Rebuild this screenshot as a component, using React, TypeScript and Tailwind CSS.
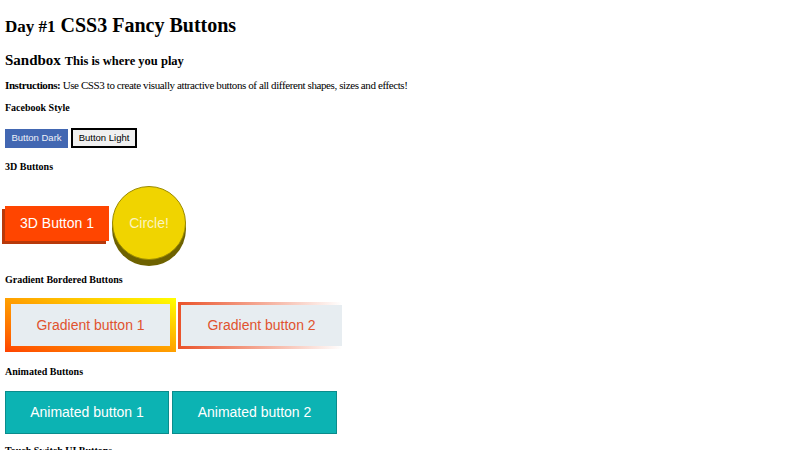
export default function App() {
  return (
    <div className="w-[800px] h-[450px] overflow-hidden bg-white px-[5px] text-black font-['Liberation_Serif',serif]">
      {/* Header */}
      <h1 className="pt-[13px] text-[20px] leading-[24px] font-bold">
        <span className="text-[17px]">Day #1</span> CSS3 Fancy Buttons
      </h1>
      <h2 className="mt-[11px] text-[15px] leading-[20px] font-bold">
        Sandbox <span className="text-[12.5px]">This is where you play</span>
      </h2>
      <p className="mt-[6px] text-[11px] leading-[16px] tracking-[-0.4px]">
        <b>Instructions:</b> Use CSS3 to create visually attractive buttons of all different shapes, sizes and effects!
      </p>

      {/* Facebook */}
      <h4 className="mt-[8px] text-[10px] leading-[14px] font-bold">Facebook Style</h4>
      <div className="mt-[13px] flex items-center gap-[3px] font-['Liberation_Sans',sans-serif] text-[9.5px]">
        <button className="h-[19px] w-[63px] bg-[#4267b2] text-[#eef1f8]">Button Dark</button>
        <button className="h-[20px] w-[66px] border-2 border-black bg-[#f0f0f0] text-black">Button Light</button>
      </div>

      {/* 3D */}
      <h4 className="mt-[12px] text-[10px] leading-[14px] font-bold">3D Buttons</h4>
      <div className="mt-[12px] flex h-[80px] items-start gap-[3px] font-['Liberation_Sans',sans-serif] text-[14px]">
        <button className="mt-[20px] h-[35px] w-[104px] bg-[#ff4500] text-white shadow-[-3px_3px_0_#b8390a]">
          3D Button 1
        </button>
        <button className="h-[74px] w-[74px] rounded-full border border-[#9a8a00] bg-[#f0d400] text-[#fbf3c0] shadow-[0_6px_0_#6e6200]">
          Circle!
        </button>
      </div>

      {/* Gradient */}
      <h4 className="mt-[7px] text-[10px] leading-[14px] font-bold">Gradient Bordered Buttons</h4>
      <div className="mt-[11px] flex items-center gap-[2px] font-['Liberation_Sans',sans-serif] text-[14px] text-[#e0532f]">
        <div className="h-[54px] w-[171px] bg-gradient-to-tr from-[#ff4000] via-[#ffa000] to-[#ffff00] p-[6px]">
          <div className="flex h-full w-full items-center justify-center bg-[#e7edf1]">Gradient button 1</div>
        </div>
        <div className="h-[47px] w-[164px] bg-gradient-to-r from-[#ea5229] to-transparent p-[3px] pr-0">
          <div className="flex h-full w-full items-center justify-center bg-[#e7edf1]">Gradient button 2</div>
        </div>
      </div>

      {/* Animated */}
      <h4 className="mt-[13px] text-[10px] leading-[14px] font-bold">Animated Buttons</h4>
      <div className="mt-[12px] flex gap-[3px] font-['Liberation_Sans',sans-serif] text-[14px] text-white">
        <button className="h-[43px] w-[164px] border border-[#0a8c8c] bg-[#0cb3b3]">Animated button 1</button>
        <button className="h-[43px] w-[165px] border border-[#0a8c8c] bg-[#0cb3b3]">Animated button 2</button>
      </div>

      <h4 className="mt-[10px] text-[10px] leading-[14px] font-bold">Touch Switch UI Buttons</h4>
    </div>
  );
}
